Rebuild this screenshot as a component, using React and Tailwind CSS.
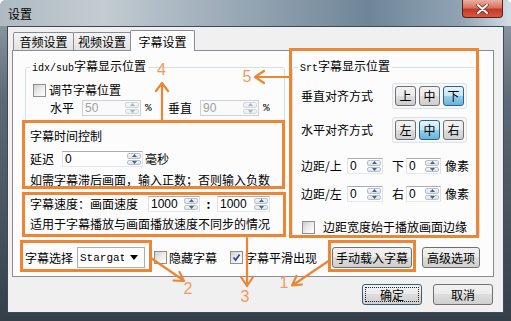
import React from "react";

const cjk = "font-['Noto_Sans_CJK_SC',sans-serif]";
const mono = "font-['Liberation_Mono',monospace]";
const latin = "font-['Liberation_Sans',sans-serif]";

function Spinner({ disabled }) {
  const fill = disabled ? "#a9b3be" : "#4d6185";
  const half =
    "flex flex-1 items-center justify-center rounded-[2px] border " +
    (disabled
      ? "border-[#d3d8de] bg-gradient-to-b from-[#f6f7f8] to-[#e8ebee]"
      : "border-[#b4c0ce] bg-gradient-to-b from-[#f5f8fb] to-[#d9e2ec]");
  return (
    <div className="flex w-[16px] shrink-0 flex-col gap-px p-px">
      <div className={half}>
        <svg width="5" height="3" viewBox="0 0 5 3">
          <path d="M0 3 L2.5 0 L5 3 Z" fill={fill} />
        </svg>
      </div>
      <div className={half}>
        <svg width="5" height="3" viewBox="0 0 5 3">
          <path d="M0 0 L2.5 3 L5 0 Z" fill={fill} />
        </svg>
      </div>
    </div>
  );
}

function SpinEdit({ value, className, disabled }) {
  return (
    <div
      className={
        "flex h-[16px] shrink-0 border " +
        (disabled
          ? "border-[#cdd0d4] bg-[#fafafa] text-[#a0a0a0] "
          : "border-[#abadb3] border-x-[#dfe1e8] border-b-[#e3e9ef] bg-white text-black ") +
        className
      }
    >
      <span className={`flex-1 pl-[2px] text-[12px] leading-[14px] ${latin}`}>{value}</span>
      <Spinner disabled={disabled} />
    </div>
  );
}

function Check({ checked }) {
  return (
    <span className="flex h-[13px] w-[13px] shrink-0 items-center justify-center border border-[#8e8f8f] bg-white">
      <span className="flex h-[11px] w-[11px] items-center justify-center bg-gradient-to-br from-[#cfcfcf] via-[#ececec] to-[#ffffff]">
        {checked && (
          <svg width="9" height="9" viewBox="0 0 9 9">
            <path d="M1.5 4.5 L3.6 7 L7.6 1.5" stroke="#2b4a8f" strokeWidth="1.7" fill="none" />
          </svg>
        )}
      </span>
    </span>
  );
}

function Btn({ children, className = "", focus }) {
  return (
    <div
      className={
        "flex h-[21px] shrink-0 rounded-[3px] border p-[2px] text-[12px] leading-[14px] bg-[linear-gradient(#f2f2f2_0%,#ebebeb_50%,#dddddd_50%,#cfcfcf_100%)] " +
        (focus ? "border-[#3c5a78] " : "border-[#707070] ") +
        className
      }
    >
      <div
        className={
          "flex flex-1 items-center justify-center " +
          (focus ? "border border-dotted border-[#222]" : "")
        }
      >
        {children}
      </div>
    </div>
  );
}

function Seg({ children, on, className = "" }) {
  return (
    <div
      className={
        "flex h-[20px] items-center justify-center rounded-[3px] border text-[12px] leading-[14px] " +
        (on
          ? "border-[#2c628b] bg-[linear-gradient(#e5f4fc_0%,#c4e5f6_50%,#98d1ef_50%,#68b3db_100%)] "
          : "border-[#707070] bg-[linear-gradient(#f2f2f2_0%,#ebebeb_50%,#dddddd_50%,#cfcfcf_100%)] ") +
        className
      }
    >
      {children}
    </div>
  );
}

function SegGroup({ items, active }) {
  return (
    <div className="flex gap-[3px] rounded-[3px] border border-[#dde2e7] bg-[#f6f7f9] p-[2px]">
      {items.map((t, i) => (
        <Seg key={t} on={i === active} className={i === 0 ? "w-[21px]" : "w-[21px]"}>
          {t}
        </Seg>
      ))}
    </div>
  );
}

function Overlay() {
  const o = "#ec8534";
  const t = "#f19a5c";
  return (
    <svg
      className="pointer-events-none absolute inset-0"
      width="511"
      height="321"
      viewBox="0 0 511 321"
    >
      <g fill="none" stroke={o} strokeWidth="3">
        <rect x="23.5" y="121.5" width="260" height="66" />
        <rect x="23.5" y="193.5" width="261" height="42" />
        <rect x="290.5" y="49.5" width="187" height="187" />
        <rect x="21.5" y="241.5" width="129" height="29" />
        <rect x="329.5" y="241.5" width="85" height="29" />
      </g>
      <g fill="none" stroke={o} strokeWidth="2.2" strokeLinecap="round" strokeLinejoin="round">
        <path d="M162 120 L162 84 M156 91 L162 83 L168 91" />
        <path d="M289 77 L256 77 M264 71 L255 77 L264 83" />
        <path d="M151 258 L183 280 M173.5 280.5 L184 281 L179.5 272" />
        <path d="M247 238 L247 285 M241 277 L247 286 L253 277" />
        <path d="M330 260 L293 285 M296.5 276 L292 285.5 L302 284.5" />
      </g>
      <g fill={t} fontFamily="Liberation Sans, sans-serif" fontSize="16" textAnchor="middle">
        <text x="161.5" y="75">4</text>
        <text x="247" y="82">5</text>
        <text x="188" y="294">2</text>
        <text x="245" y="302">3</text>
        <text x="284" y="288">1</text>
      </g>
    </svg>
  );
}

export default function App() {
  return (
    <div
      className={`relative h-[321px] w-[511px] overflow-hidden rounded-t-[6px] bg-[linear-gradient(180deg,#97a4ae_0%,#5d6a77_30%,#343f4a_100%)] text-black ${cjk}`}
    >
      {/* 标题栏 */}
      <div className="flex h-[26px] items-start bg-[linear-gradient(90deg,#aeb9c1_0%,#c3ccd2_20%,#9aaab7_45%,#6f8597_72%,#8fa3b3_90%,#d3dde4_100%)]">
        <span className="pl-[8px] pt-[6px] text-[12px] leading-[16px]">设置</span>
        <div className="ml-auto mr-[8px] flex h-[18px] w-[41px] items-center justify-center rounded-b-[4px] border border-t-0 border-[#5b2019] bg-[linear-gradient(#eab0a2_0%,#d9715f_45%,#c23a28_55%,#d8573f_100%)]">
          <svg width="13" height="10" viewBox="0 0 13 10">
            <path d="M2 1 L11 9 M11 1 L2 9" stroke="#6a2a22" strokeWidth="3.4" strokeLinecap="round" />
            <path d="M2 1 L11 9 M11 1 L2 9" stroke="#ffffff" strokeWidth="2" strokeLinecap="round" />
          </svg>
        </div>
      </div>

      {/* 客户区 */}
      <div className="mx-[7px] h-[287px] border border-[#3d4955] bg-[#f0f0f0]">
        {/* 标签页 */}
        <div className="flex h-[23px] items-end pl-[5px] text-[12px] leading-[14px]">
          <div className="flex h-[18px] w-[61px] items-center justify-center rounded-t-[2px] border border-b-0 border-[#898c95] bg-gradient-to-b from-[#f5f5f5] to-[#e3e3e3]">
            音频设置
          </div>
          <div className="-ml-px flex h-[18px] w-[58px] items-center justify-center rounded-t-[2px] border border-b-0 border-[#898c95] bg-gradient-to-b from-[#f5f5f5] to-[#e3e3e3]">
            视频设置
          </div>
          <div className="relative z-10 -mb-px -ml-px flex h-[21px] w-[65px] items-center justify-center rounded-t-[2px] border border-b-0 border-[#898c95] bg-[#fcfcfc] pt-[2px]">
            字幕设置
          </div>
        </div>

        {/* 面板 */}
        <div className="ml-[4px] flex h-[227px] w-[482px] flex-col border border-[#898c95] bg-[#fcfcfc] text-[12px] leading-[14px]">
          <div className="flex h-[186px]">
            {/* 左列 */}
            <div className="ml-[9px] flex w-[263px] flex-col">
              <fieldset className="ml-[3px] mt-[8px] w-[260px] rounded-[3px] border border-[#d5dfe5] pb-[6px]">
                <legend className="ml-[4px] px-[2px] leading-[14px]">
                  <span className={`text-[10px] ${mono}`}>idx/sub</span>字幕显示位置
                </legend>
                <div className="mt-[6px] flex h-[16px] items-center gap-[3px] pl-[7px]">
                  <Check />
                  <span>调节字幕位置</span>
                </div>
                <div className="mt-[2px] flex h-[16px] items-center pl-[24px]">
                  <span className="w-[24px]">水平</span>
                  <SpinEdit value="50" disabled className="ml-[8px] w-[59px]" />
                  <span className={`ml-[4px] w-[23px] text-[11px] ${mono}`}>%</span>
                  <span className="w-[24px]">垂直</span>
                  <SpinEdit value="90" disabled className="ml-[8px] w-[59px]" />
                  <span className={`ml-[4px] text-[11px] ${mono}`}>%</span>
                </div>
              </fieldset>

              {/* 字幕时间控制 */}
              <div className="flex h-[69px] flex-col pl-[8px] pt-[5px]">
                <div className="flex h-[16px] items-center">字幕时间控制</div>
                <div className="mt-[7px] flex h-[16px] items-center">
                  <span className="w-[24px]">延迟</span>
                  <SpinEdit value="0" className="ml-[8px] w-[81px]" />
                  <span className="ml-[2px]">毫秒</span>
                </div>
                <div className="mt-[5px] flex h-[16px] items-center">
                  如需字幕滞后画面，输入正数；否则输入负数
                </div>
              </div>

              {/* 字幕速度 */}
              <div className="mt-[3px] flex h-[45px] flex-col pl-[8px] pt-[3px]">
                <div className="flex h-[16px] items-center">
                  <span className="w-[108px]">字幕速度：画面速度</span>
                  <SpinEdit value="1000" className="ml-[10px] w-[52px]" />
                  <span className="ml-[2px] w-[13px] text-center font-bold">:</span>
                  <SpinEdit value="1000" className="ml-[2px] w-[53px]" />
                </div>
                <div className="mt-[4px] flex h-[16px] items-center">
                  适用于字幕播放与画面播放速度不同步的情况
                </div>
              </div>
            </div>

            {/* 右列 */}
            <fieldset className="ml-[7px] mt-[8px] h-[178px] w-[188px] rounded-[3px] border border-[#d5dfe5]">
              <legend className="ml-[5px] px-[2px] leading-[14px]">
                <span className={`text-[10px] ${mono}`}>Srt</span>字幕显示位置
              </legend>
              <div className="pl-[8px]">
                <div className="mt-[7px] flex items-center">
                  <span className="w-[91px]">垂直对齐方式</span>
                  <SegGroup items={["上", "中", "下"]} active={2} />
                </div>
                <div className="mt-[8px] flex items-center">
                  <span className="w-[91px]">水平对齐方式</span>
                  <SegGroup items={["左", "中", "右"]} active={1} />
                </div>
                <div className="mt-[15px] flex h-[16px] items-center">
                  <span className="w-[42px]">边距/上</span>
                  <SpinEdit value="0" className="ml-[4px] w-[36px]" />
                  <span className="ml-[9px]">下</span>
                  <SpinEdit value="0" className="ml-[2px] w-[35px]" />
                  <span className="ml-[4px]">像素</span>
                </div>
                <div className="mt-[12px] flex h-[16px] items-center">
                  <span className="w-[42px]">边距/左</span>
                  <SpinEdit value="0" className="ml-[4px] w-[36px]" />
                  <span className="ml-[9px]">右</span>
                  <SpinEdit value="0" className="ml-[2px] w-[35px]" />
                  <span className="ml-[4px]">像素</span>
                </div>
                <div className="mt-[17px] flex h-[16px] items-center pl-px">
                  <Check />
                  <span className="ml-[8px]">边距宽度始于播放画面边缘</span>
                </div>
              </div>
            </fieldset>
          </div>

          {/* 底部一行 */}
          <div className="mt-[10px] flex h-[21px] items-center pl-[12px]">
            <span className="w-[48px]">字幕选择</span>
            <div className="ml-[4px] flex h-[21px] w-[68px] items-center border border-[#abadb3] bg-white">
              <span className={`w-[46px] overflow-hidden whitespace-nowrap pl-[2px] text-[11px] ${mono}`}>
                Stargate
              </span>
              <span className="flex flex-1 justify-center">
                <svg width="8" height="5" viewBox="0 0 8 5">
                  <path d="M0 0 L8 0 L4 5 Z" fill="#000" />
                </svg>
              </span>
            </div>
            <span className="ml-[9px]">
              <Check />
            </span>
            <span className="ml-[2px]">隐藏字幕</span>
            <span className="ml-[13px]">
              <Check checked />
            </span>
            <span className="ml-[2px]">字幕平滑出现</span>
            <Btn className="ml-[15px] w-[80px]">手动载入字幕</Btn>
            <Btn className="ml-[10px] w-[58px]">高级选项</Btn>
          </div>
        </div>

        {/* 确定 / 取消 */}
        <div className="mt-[7px] flex justify-end gap-[11px] pr-[10px]">
          <Btn focus className="w-[60px]">确定</Btn>
          <Btn className="w-[60px]">取消</Btn>
        </div>
      </div>

      <Overlay />
    </div>
  );
}
